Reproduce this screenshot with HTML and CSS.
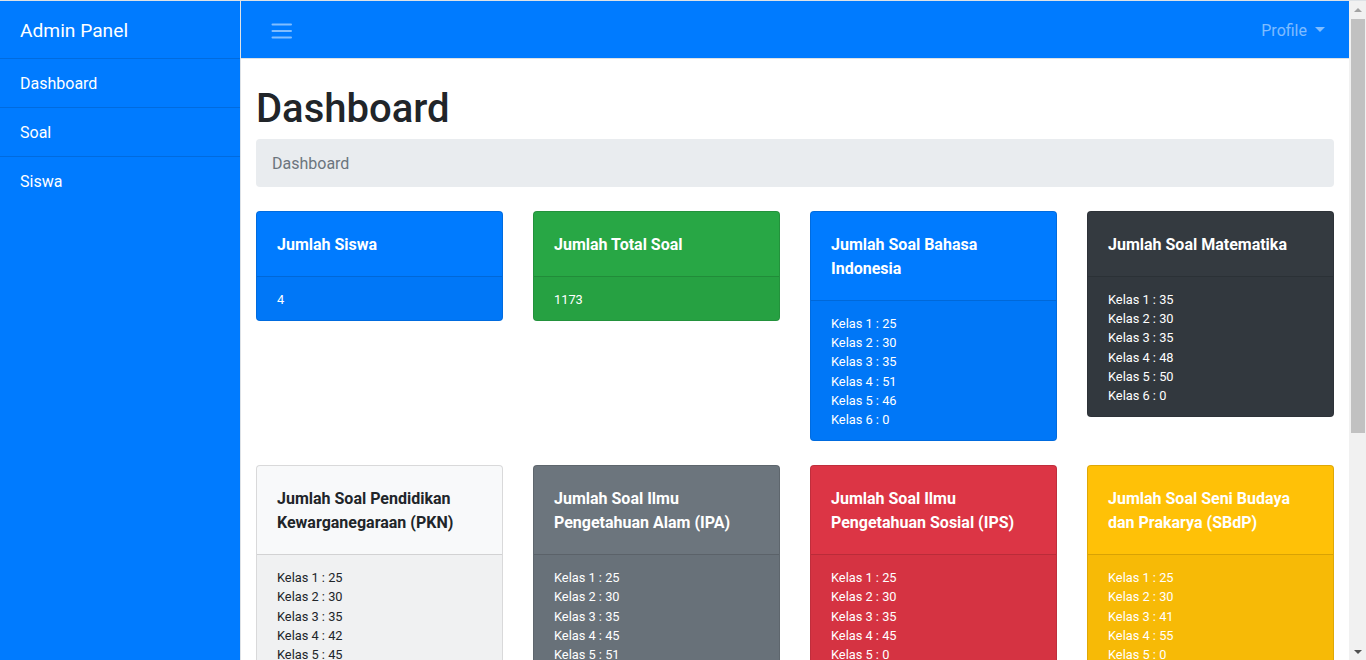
FILE: index.html
```html
<!DOCTYPE html>
<html lang="id">
<head>
<meta charset="utf-8">
<title>Admin Panel</title>
<link rel="stylesheet" href="styles.css">
</head>
<body>
<div class="wrapper">
  <aside class="sidebar">
    <div class="sidebar-heading">Admin Panel</div>
    <nav class="sidebar-list">
      <a class="sidebar-item" href="#">Dashboard</a>
      <a class="sidebar-item" href="#">Soal</a>
      <a class="sidebar-item" href="#">Siswa</a>
    </nav>
  </aside>
  <div class="page">
    <header class="navbar">
      <button class="toggler" type="button" aria-label="Toggle menu">
        <svg width="24" height="24" viewBox="0 0 24 24" aria-hidden="true">
          <path d="M2.5 6.5h18.5M2.5 13h18.5M2.5 19.5h18.5" stroke="rgba(255,255,255,0.5)" stroke-width="2" stroke-linecap="round" fill="none"/>
        </svg>
      </button>
      <a class="profile" href="#">Profile<span class="caret"></span></a>
    </header>
    <main class="content">
      <h1 class="title">Dashboard</h1>
      <div class="breadcrumb">Dashboard</div>
      <div class="cards">
        <div class="card card-primary">
          <div class="card-body"><h5 class="card-title">Jumlah Siswa</h5></div>
          <div class="card-footer">4</div>
        </div>
        <div class="card card-success">
          <div class="card-body"><h5 class="card-title">Jumlah Total Soal</h5></div>
          <div class="card-footer">1173</div>
        </div>
        <div class="card card-primary">
          <div class="card-body"><h5 class="card-title">Jumlah Soal Bahasa Indonesia</h5></div>
          <div class="card-footer">Kelas 1 : 25<br>Kelas 2 : 30<br>Kelas 3 : 35<br>Kelas 4 : 51<br>Kelas 5 : 46<br>Kelas 6 : 0</div>
        </div>
        <div class="card card-dark">
          <div class="card-body"><h5 class="card-title">Jumlah Soal Matematika</h5></div>
          <div class="card-footer">Kelas 1 : 35<br>Kelas 2 : 30<br>Kelas 3 : 35<br>Kelas 4 : 48<br>Kelas 5 : 50<br>Kelas 6 : 0</div>
        </div>
        <div class="card card-light">
          <div class="card-body"><h5 class="card-title">Jumlah Soal Pendidikan Kewarganegaraan (PKN)</h5></div>
          <div class="card-footer">Kelas 1 : 25<br>Kelas 2 : 30<br>Kelas 3 : 35<br>Kelas 4 : 42<br>Kelas 5 : 45<br>Kelas 6 : 0</div>
        </div>
        <div class="card card-secondary">
          <div class="card-body"><h5 class="card-title">Jumlah Soal Ilmu Pengetahuan Alam (IPA)</h5></div>
          <div class="card-footer">Kelas 1 : 25<br>Kelas 2 : 30<br>Kelas 3 : 35<br>Kelas 4 : 45<br>Kelas 5 : 51<br>Kelas 6 : 0</div>
        </div>
        <div class="card card-danger">
          <div class="card-body"><h5 class="card-title">Jumlah Soal Ilmu Pengetahuan Sosial (IPS)</h5></div>
          <div class="card-footer">Kelas 1 : 25<br>Kelas 2 : 30<br>Kelas 3 : 35<br>Kelas 4 : 45<br>Kelas 5 : 0<br>Kelas 6 : 0</div>
        </div>
        <div class="card card-warning">
          <div class="card-body"><h5 class="card-title">Jumlah Soal Seni Budaya dan Prakarya (SBdP)</h5></div>
          <div class="card-footer">Kelas 1 : 25<br>Kelas 2 : 30<br>Kelas 3 : 41<br>Kelas 4 : 55<br>Kelas 5 : 0<br>Kelas 6 : 0</div>
        </div>
      </div>
    </main>
  </div>
  <div class="scrollbar" aria-hidden="true">
    <span class="sb-arrow sb-up"></span>
    <span class="sb-thumb"></span>
    <span class="sb-fill"></span>
    <span class="sb-arrow sb-down"></span>
  </div>
</div>
</body>
</html>
```
FILE: styles.css
```css
html, body {
  height: 100%;
}
body {
  margin: 0;
  overflow: hidden;
  font-family: Roboto, "Liberation Sans", Arial, sans-serif;
  font-size: 16px;
  line-height: 1.5;
  color: #212529;
  background: #fff;
}
a {
  text-decoration: none;
}
.wrapper {
  display: flex;
  border-top: 1px solid #dee2e6;
  height: 659px;
  overflow: hidden;
}
.sidebar {
  width: 240px;
  flex: 0 0 240px;
  background: #007bff;
  border-right: 1px solid #dee2e6;
  color: #fff;
}
.sidebar-heading {
  padding: 15px 20px 13px;
  font-size: 19.2px;
  line-height: 29px;
  border-bottom: 1px solid rgba(0, 0, 0, 0.125);
}
.sidebar-list {
  display: flex;
  flex-direction: column;
}
.sidebar-item {
  color: #fff;
  padding: 13px 20px 11px;
  line-height: 24px;
  border-bottom: 1px solid rgba(0, 0, 0, 0.125);
}
.sidebar-item:last-child {
  border-bottom: 0;
}
.page {
  flex: 1;
  min-width: 0;
  overflow: hidden;
}
.navbar {
  height: 57px;
  background: #007bff;
  border-bottom: 1px solid #dee2e6;
  display: flex;
  align-items: center;
  justify-content: space-between;
  padding: 0 16px;
}
.toggler {
  background: none;
  border: 1px solid transparent;
  padding: 4px 12px;
  margin: 0;
  display: flex;
  cursor: pointer;
}
.profile {
  color: rgba(255, 255, 255, 0.5);
  padding: 9px 8px 7px;
  line-height: 24px;
}
.caret {
  display: inline-block;
  margin-left: 8px;
  vertical-align: 4px;
  border-top: 5px solid;
  border-left: 5px solid transparent;
  border-right: 5px solid transparent;
}
.content {
  padding: 26px 15px 0;
}
.title {
  margin: 0 0 6px;
  font-size: 40px;
  font-weight: 500;
  line-height: 1.2;
}
.breadcrumb {
  background: #e9ecef;
  border-radius: 4px;
  padding: 13px 16px 11px;
  color: #6c757d;
  line-height: 24px;
  margin-bottom: 24px;
}
.cards {
  display: grid;
  grid-template-columns: repeat(4, 1fr);
  column-gap: 30px;
  row-gap: 24px;
  align-items: start;
}
.card {
  border: 1px solid rgba(0, 0, 0, 0.125);
  border-radius: 4px;
  overflow: hidden;
  color: #fff;
}
.card-body {
  padding: 21px 20px 19px;
}
.card-title {
  margin: 0;
  font-size: 16px;
  font-weight: 700;
  line-height: 24px;
}
.card-footer {
  padding: 13px 20px 11px;
  font-size: 12.8px;
  line-height: 19.2px;
  background: rgba(0, 0, 0, 0.03);
  border-top: 1px solid rgba(0, 0, 0, 0.125);
}
.card-primary { background: #007bff; }
.card-success { background: #28a745; }
.card-dark { background: #343a40; }
.card-light { background: #f8f9fa; color: #212529; }
.card-secondary { background: #6c757d; }
.card-danger { background: #dc3545; }
.card-warning { background: #ffc107; }

.scrollbar {
  flex: 0 0 17px;
  width: 17px;
  background: #f1f1f1;
  display: flex;
  flex-direction: column;
  align-items: center;
}
.sb-arrow {
  flex: 0 0 17px;
  width: 17px;
  display: flex;
  align-items: center;
  justify-content: center;
}
.sb-arrow::before {
  content: "";
  display: block;
  border-left: 4px solid transparent;
  border-right: 4px solid transparent;
}
.sb-up::before {
  border-bottom: 4px solid #a3a3a3;
}
.sb-down::before {
  border-top: 4px solid #505050;
}
.sb-thumb {
  flex: 0 0 414px;
  width: 14px;
  margin: 1px 0 0;
  background: #c1c1c1;
}
.sb-fill {
  flex: 1;
}
```
